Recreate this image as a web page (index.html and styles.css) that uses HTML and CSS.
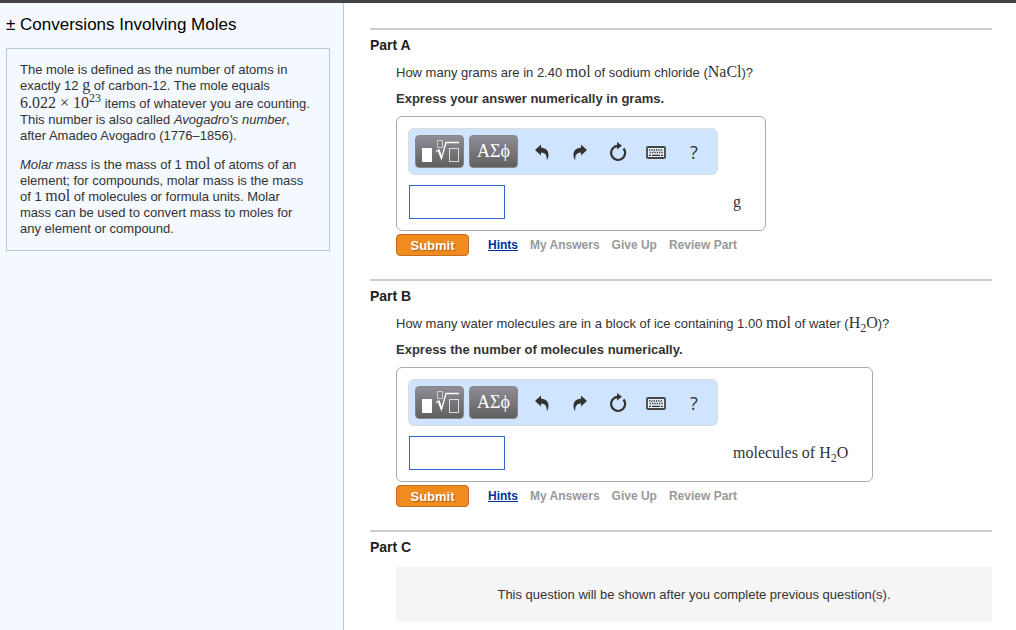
FILE: index.html
```html
<!DOCTYPE html>
<html lang="en">
  <head>
    <meta charset="UTF-8" />
    <meta name="viewport" content="width=device-width, initial-scale=1.0" />
    <title>Conversions Involving Moles</title>
    <link rel="stylesheet" href="styles.css">
  </head>
  <body>
    <!-- icons used by both toolbars -->
    <svg class="sprite" aria-hidden="true">
      <symbol id="root" viewBox="0 0 38 24">
        <rect x="1" y="8" width="10" height="14" fill="#fff"/>
        <rect x="16.500" y=".500" width="5" height="7" fill="none" stroke="#ccc"/>
        <path d="M15 11.500 L18 10 L20.500 18.500 L25 2.500 H38" fill="none" stroke="#fff" stroke-width="1.300"/>
        <path d="M17.700 10.500 L20.500 18" stroke="#fff" stroke-width="2"/>
        <rect x="28.500" y="8.500" width="9" height="13" fill="none" stroke="#ddd"/>
      </symbol>
      <symbol id="undo" viewBox="0 0 16 16">
        <path d="M1 6 L7 .500 V3.700 C12.500 3.700 16.500 8 13.500 15.500 H12.700 C13 11.500 11.500 8.800 7 8.500 V11.500 Z" fill="#333"/>
      </symbol>
      <symbol id="reset" viewBox="0 0 18 20">
        <path d="M10 4 A7 7 0 1 0 14.500 6.500" fill="none" stroke="#333" stroke-width="2.200"/>
        <path d="M8 0 L13 3.800 L8 7.500 Z" fill="#333"/>
      </symbol>
      <symbol id="keyboard" viewBox="0 0 20 13">
        <rect x="1" y="1" width="18" height="11" rx="1" fill="#e6f0fb" stroke="#444" stroke-width="1.800"/>
        <path d="M3 4 H17 M3.800 6.500 H17" stroke="#333" stroke-width="1.300" stroke-dasharray="1.300 1"/>
        <path d="M3 9.300 H5 M6 9.300 H14 M15 9.300 H17" stroke="#333" stroke-width="1.200"/>
      </symbol>
    </svg>
    <div class="page">
      <aside class="sidebar">
        <h1>± Conversions Involving Moles</h1>
        <div class="intro">
          <p>The mole is defined as the number of atoms in exactly 12 <span class="math">g</span> of carbon-12. The mole equals <span class="math">6.022 × 10<sup>23</sup></span> items of whatever you are counting. This number is also called <i>Avogadro's number</i>,<br> after Amadeo Avogadro (1776–1856).</p>
          <p><i>Molar mass</i> is the mass of 1 <span class="math">mol</span> of atoms of an<br> element; for compounds, molar mass is the mass<br> of 1 <span class="math">mol</span> of molecules or formula units. Molar<br> mass can be used to convert mass to moles for<br> any element or compound.</p>
        </div>
      </aside>
      <main class="content">
        <section class="part">
          <h2>Part A</h2>
          <div class="part-body">
            <p class="question">How many grams are in 2.40 <span class="math">mol</span> of sodium chloride (<span class="math">NaCl</span>)?</p>
            <p class="instruction" id="labelA">Express your answer numerically in grams.</p>
            <div class="answer">
              <div class="toolbar">
                <button type="button" class="dark" aria-label="Templates"><svg class="icon-root"><use href="#root"/></svg></button>
                <button type="button" class="dark">ΑΣϕ</button>
                <button type="button" class="tool" aria-label="Undo"><svg class="icon"><use href="#undo"/></svg></button>
                <button type="button" class="tool" aria-label="Redo"><svg class="icon flip"><use href="#undo"/></svg></button>
                <button type="button" class="tool" aria-label="Reset"><svg class="icon-reset"><use href="#reset"/></svg></button>
                <button type="button" class="tool" aria-label="Keyboard"><svg class="icon-keyboard"><use href="#keyboard"/></svg></button>
                <button type="button" class="tool">?</button>
              </div>
              <input type="text" class="field" aria-labelledby="labelA">
              <span class="math unit">g</span>
            </div>
            <div class="actions">
              <button type="submit" class="submit">Submit</button>
              <a href="#" class="hints">Hints</a>
              <a>My Answers</a>
              <a>Give Up</a>
              <a>Review Part</a>
            </div>
          </div>
        </section>
        <section class="part">
          <h2>Part B</h2>
          <div class="part-body">
            <p class="question">How many water molecules are in a block of ice containing 1.00 <span class="math">mol</span> of water (<span class="math">H<sub>2</sub>O</span>)?</p>
            <p class="instruction" id="labelB">Express the number of molecules numerically.</p>
            <div class="answer">
              <div class="toolbar">
                <button type="button" class="dark" aria-label="Templates"><svg class="icon-root"><use href="#root"/></svg></button>
                <button type="button" class="dark">ΑΣϕ</button>
                <button type="button" class="tool" aria-label="Undo"><svg class="icon"><use href="#undo"/></svg></button>
                <button type="button" class="tool" aria-label="Redo"><svg class="icon flip"><use href="#undo"/></svg></button>
                <button type="button" class="tool" aria-label="Reset"><svg class="icon-reset"><use href="#reset"/></svg></button>
                <button type="button" class="tool" aria-label="Keyboard"><svg class="icon-keyboard"><use href="#keyboard"/></svg></button>
                <button type="button" class="tool">?</button>
              </div>
              <input type="text" class="field" aria-labelledby="labelB">
              <span class="math unit">molecules of H<sub>2</sub>O</span>
            </div>
            <div class="actions">
              <button type="submit" class="submit">Submit</button>
              <a href="#" class="hints">Hints</a>
              <a>My Answers</a>
              <a>Give Up</a>
              <a>Review Part</a>
            </div>
          </div>
        </section>
        <section class="part">
          <h2>Part C</h2>
          <div class="part-body">
            <p class="locked">This question will be shown after you complete previous question(s).</p>
          </div>
        </section>
      </main>
    </div>
  </body>
</html>
```
FILE: styles.css
```css
* {
  box-sizing: border-box;
}

body {
  margin: 0;
  border-top: 3px solid #444;
  font-family: Arial, "Liberation Sans", sans-serif;
  font-size: 13px;
  line-height: 16px;
  color: #333;
  background-color: #fff;
}

h1, h2, p {
  margin: 0;
}

button, input {
  font-family: inherit;
}

.sprite {
  display: none;
}

.page {
  display: flex;
  min-height: calc(100vh - 3px);
}

/* left column */
.sidebar {
  flex: 0 0 344px;
  padding: 12px 13px 0 6px;
  background-color: #f4f8ff;
  border-right: 1px solid #b5c9d9;
}

.sidebar h1 {
  font-size: 17px;
  line-height: 20px;
  font-weight: normal;
  color: #000;
}

.intro {
  margin-top: 13px;
  padding: 13px 10px 13px 13px;
  border: 1px solid #b5c9d9;
}

.intro p + p {
  margin-top: 13px;
}

.math {
  font-family: "Liberation Serif", "Times New Roman", serif;
  font-size: 16px;
  line-height: 14px;
  white-space: nowrap;
}

.math sup, .math sub {
  font-size: 12px;
  line-height: 1px;
}

.math sup {
  line-height: 8px;
}

/* right column */
.content {
  flex: 1;
  min-width: 0;
  padding: 25px 24px 0 26px;
}

.part {
  border-top: 2px solid #ccc;
  padding-top: 7px;
  margin-bottom: 23px;
}

.part h2 {
  font-size: 14px;
  line-height: 16px;
  color: #222;
}

.part-body {
  padding: 12px 0 0 26px;
}

.instruction {
  margin-top: 10px;
  font-weight: bold;
}

.answer {
  display: inline-grid;
  grid-template-columns: 310px auto;
  column-gap: 15px;
  row-gap: 10px;
  margin-top: 9px;
  padding: 11px 24px 11px 11px;
  border: 1px solid #aaa;
  border-radius: 6px;
  vertical-align: top;
}

.toolbar {
  display: flex;
  grid-column: 1;
  align-items: center;
  padding: 6px 0 6px 6px;
  height: 47px;
  background-color: #cfe5ff;
  border: 1px solid #ddd;
  border-radius: 6px;
}

.dark {
  display: flex;
  flex-shrink: 0;
  align-items: center;
  justify-content: center;
  width: 49px;
  height: 33px;
  margin-right: 5px;
  padding: 0;
  border: 1px solid #888;
  border-radius: 4px;
  background: linear-gradient(#8f8d96, #606060);
  color: #fff;
  font-family: "Liberation Serif", "Times New Roman", serif;
  font-size: 18px;
}

.tool {
  display: flex;
  align-items: center;
  justify-content: center;
  width: 38px;
  height: 33px;
  padding: 0;
  border: 0;
  background: none;
  color: #333;
  font-family: "Open Sans", sans-serif;
  font-size: 18px;
}

.icon-root {
  width: 38px;
  height: 24px;
}

.icon {
  width: 16px;
  height: 16px;
}

.flip {
  transform: scaleX(-1);
}

.icon-reset {
  width: 18px;
  height: 20px;
}

.icon-keyboard {
  width: 20px;
  height: 13px;
  margin-top: 2px;
}

.field {
  grid-column: 1;
  width: 96px;
  height: 34px;
  margin-left: 1px;
  border: 1px solid #36c;
  background-color: #fff;
}

.unit {
  grid-column: 2;
  align-self: center;
}

.actions {
  display: flex;
  align-items: center;
  gap: 12px;
  margin-top: 3px;
  font-weight: bold;
  font-size: 12px;
  color: #999;
}

.submit {
  width: 73px;
  height: 22px;
  margin-right: 7px;
  padding: 0;
  border: 1px solid #c96a28;
  border-radius: 4px;
  background-color: #f08c1e;
  color: #fff;
  font-size: 13px;
  font-weight: bold;
  text-shadow: 1px 1px 1px #a65a10;
}

.hints {
  color: #039;
}

.locked {
  padding: 20px 16px 19px;
  background-color: #f5f5f5;
  text-align: center;
}
```
